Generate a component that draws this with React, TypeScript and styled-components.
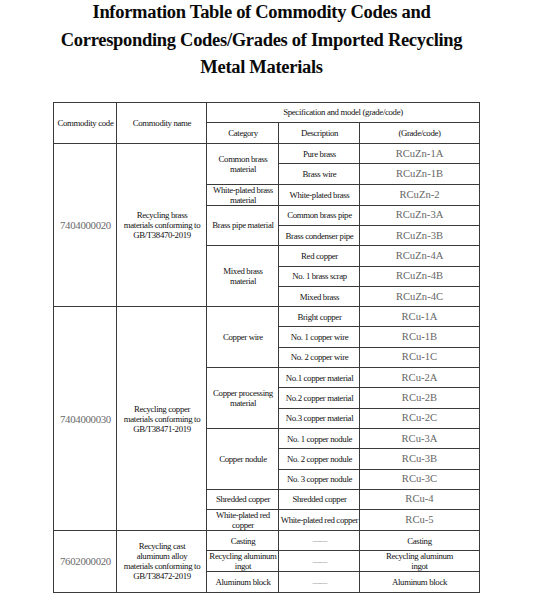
import React, { Fragment, ReactNode } from "react";
import styled, { createGlobalStyle } from "styled-components";

const Global = createGlobalStyle`
  html, body { margin: 0; padding: 0; background: #ffffff; }
  body { font-family: "Liberation Serif", "Times New Roman", serif; color: #111; }
`;

const Page = styled.div`
  width: 533px;
  display: flex;
  flex-direction: column;
  align-items: center;
`;

const Title = styled.h1`
  margin: -1px 10px 0 0;
  font-family: "Liberation Serif", "Times New Roman", serif;
  font-weight: 700;
  font-size: 18.5px;
  letter-spacing: -0.3px;
  line-height: 27.5px;
  text-align: center;
  color: #0a0a0a;
`;

const Table = styled.table`
  margin-top: 20px;
  border-collapse: collapse;
  table-layout: fixed;
  width: 425px;
  border: 1px solid #3a3a3a;
`;

const Row = styled.tr<{ $head?: boolean }>`
  height: ${(p) => (p.$head ? "20.8px" : "20.3px")};
`;

const Cell = styled.td`
  border: 1px solid #3a3a3a;
  padding: 0;
  text-align: center;
  vertical-align: middle;
  font-family: "Liberation Serif", "Times New Roman", serif;
  font-size: 8.8px;
  letter-spacing: -0.35px;
  line-height: 10px;
  white-space: nowrap;
  color: #111111;
  overflow: hidden;
`;

const HeadCell = styled(Cell).attrs({ as: "th" })`
  font-weight: 400;
`;

const CodeCell = styled(Cell)`
  font-size: 10.8px;
  letter-spacing: -0.3px;
  color: #6a6a6a;
`;

const GradeCell = styled(Cell)<{ $text?: boolean }>`
  font-size: ${(p) => (p.$text ? "8.8px" : "10.6px")};
  letter-spacing: ${(p) => (p.$text ? "-0.35px" : "0px")};
  color: ${(p) => (p.$text ? "#111111" : "#666666")};
`;

const Dash = styled.span`
  color: #a8a8a8;
  font-size: 8px;
  letter-spacing: -1px;
`;

type Item = { desc: ReactNode; grade: ReactNode; dash?: boolean };
type Cat = { label: ReactNode; items: Item[] };
type Group = { code: string; name: ReactNode; cats: Cat[] };

const groups: Group[] = [
  {
    code: "7404000020",
    name: (
      <>
        Recycling brass
        <br />
        materials conforming to
        <br />
        GB/T38470-2019
      </>
    ),
    cats: [
      {
        label: (
          <>
            Common brass
            <br />
            material
          </>
        ),
        items: [
          { desc: "Pure brass", grade: "RCuZn-1A" },
          { desc: "Brass wire", grade: "RCuZn-1B" },
        ],
      },
      {
        label: (
          <>
            White-plated brass
            <br />
            material
          </>
        ),
        items: [{ desc: "White-plated brass", grade: "RCuZn-2" }],
      },
      {
        label: "Brass pipe material",
        items: [
          { desc: "Common brass pipe", grade: "RCuZn-3A" },
          { desc: "Brass condenser pipe", grade: "RCuZn-3B" },
        ],
      },
      {
        label: (
          <>
            Mixed brass
            <br />
            material
          </>
        ),
        items: [
          { desc: "Red copper", grade: "RCuZn-4A" },
          { desc: "No. 1 brass scrap", grade: "RCuZn-4B" },
          { desc: "Mixed brass", grade: "RCuZn-4C" },
        ],
      },
    ],
  },
  {
    code: "7404000030",
    name: (
      <>
        Recycling copper
        <br />
        materials conforming to
        <br />
        GB/T38471-2019
      </>
    ),
    cats: [
      {
        label: "Copper wire",
        items: [
          { desc: "Bright copper", grade: "RCu-1A" },
          { desc: "No. 1 copper wire", grade: "RCu-1B" },
          { desc: "No. 2 copper wire", grade: "RCu-1C" },
        ],
      },
      {
        label: (
          <>
            Copper processing
            <br />
            material
          </>
        ),
        items: [
          { desc: "No.1 copper material", grade: "RCu-2A" },
          { desc: "No.2 copper material", grade: "RCu-2B" },
          { desc: "No.3 copper material", grade: "RCu-2C" },
        ],
      },
      {
        label: "Copper nodule",
        items: [
          { desc: "No. 1 copper nodule", grade: "RCu-3A" },
          { desc: "No. 2 copper nodule", grade: "RCu-3B" },
          { desc: "No. 3 copper nodule", grade: "RCu-3C" },
        ],
      },
      {
        label: "Shredded copper",
        items: [{ desc: "Shredded copper", grade: "RCu-4" }],
      },
      {
        label: (
          <>
            White-plated red
            <br />
            copper
          </>
        ),
        items: [{ desc: "White-plated red copper", grade: "RCu-5" }],
      },
    ],
  },
  {
    code: "7602000020",
    name: (
      <>
        Recycling cast
        <br />
        aluminum alloy
        <br />
        materials conforming to
        <br />
        GB/T38472-2019
      </>
    ),
    cats: [
      { label: "Casting", items: [{ desc: "", grade: "Casting", dash: true }] },
      {
        label: (
          <>
            Recycling aluminum
            <br />
            ingot
          </>
        ),
        items: [
          {
            desc: "",
            grade: (
              <>
                Recycling aluminum
                <br />
                ingot
              </>
            ),
            dash: true,
          },
        ],
      },
      {
        label: "Aluminum block",
        items: [{ desc: "", grade: "Aluminum block", dash: true }],
      },
    ],
  },
];

export default function App() {
  return (
    <Page>
      <Global />
      <Title>
        Information Table of Commodity Codes and
        <br />
        Corresponding Codes/Grades of Imported Recycling
        <br />
        Metal Materials
      </Title>
      <Table>
        <colgroup>
          <col style={{ width: 63 }} />
          <col style={{ width: 90 }} />
          <col style={{ width: 72 }} />
          <col style={{ width: 81 }} />
          <col style={{ width: 119 }} />
        </colgroup>
        <thead>
          <Row $head>
            <HeadCell rowSpan={2}>Commodity code</HeadCell>
            <HeadCell rowSpan={2}>Commodity name</HeadCell>
            <HeadCell colSpan={3}>Specification and model (grade/code)</HeadCell>
          </Row>
          <Row $head>
            <HeadCell>Category</HeadCell>
            <HeadCell>Description</HeadCell>
            <HeadCell>(Grade/code)</HeadCell>
          </Row>
        </thead>
        <tbody>
          {groups.map((g) => {
            const total = g.cats.reduce((n, c) => n + c.items.length, 0);
            return (
              <Fragment key={g.code}>
                {g.cats.map((c, ci) =>
                  c.items.map((it, ii) => (
                    <Row key={`${g.code}-${ci}-${ii}`}>
                      {ci === 0 && ii === 0 && (
                        <>
                          <CodeCell rowSpan={total}>{g.code}</CodeCell>
                          <Cell rowSpan={total}>{g.name}</Cell>
                        </>
                      )}
                      {ii === 0 && <Cell rowSpan={c.items.length}>{c.label}</Cell>}
                      <Cell>{it.dash ? <Dash>——</Dash> : it.desc}</Cell>
                      <GradeCell $text={it.dash}>{it.grade}</GradeCell>
                    </Row>
                  ))
                )}
              </Fragment>
            );
          })}
        </tbody>
      </Table>
    </Page>
  );
}
